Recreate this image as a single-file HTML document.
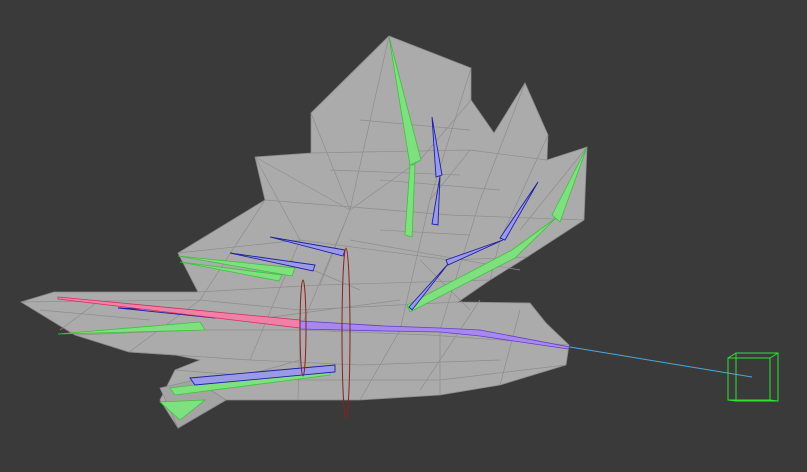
<!DOCTYPE html>
<html><head><style>html,body{margin:0;padding:0;background:#3a3a3a;width:807px;height:472px;overflow:hidden}</style></head>
<body>
<svg width="807" height="472" viewBox="0 0 807 472" xmlns="http://www.w3.org/2000/svg">
<rect width="807" height="472" fill="#3a3a3a"/>
<g fill="#ababab" stroke="#8c8c8c" stroke-width="0.8">
<polygon points="389,36 471,68 471,100 494,133 525,83 548,135 547,160 587,147 584,220 527,257 490,280 458,302 530,303 546,323 569,345 566,365 500,385 440,395 360,400 298,400 226,400 178,428 160,400 175,370 200,360 175,355 129,352 75,335 21,302 54,292 198,292 178,253 265,200 255,157 311,153 311,113"/>
<polygon points="160,388 178,428 226,400 195,380" fill="#a4a4a4"/>
</g>
<g stroke="#8e8e8e" stroke-width="0.7" fill="none">
<path d="M311,113 L389,36 L420,160 L471,100 M311,153 L470,150 L547,160 M255,157 L350,210 L420,160 M265,200 L450,215 L584,220 M178,253 L300,240 L450,260 L527,257 M198,292 L320,285 L490,280 M21,302 L200,300 L300,310 L458,302 M75,335 L200,330 L300,330 L430,335 L569,345 M129,352 L250,360 L360,365 L500,360 M175,370 L300,380 L440,380 L566,365 M389,36 L350,210 L300,330 M471,68 L430,200 L400,330 L360,400 M525,83 L480,200 L440,330 L440,395 M311,113 L350,210 L320,285 M255,157 L300,240 L250,360 M548,135 L500,240 L490,280 M587,147 L520,230 M300,330 L298,400 M400,330 L360,400 M200,300 L129,352 M265,200 L200,300 M470,150 L430,200 M380,180 L500,190 M350,240 L520,270 M330,170 L460,175 M360,120 L470,130 M250,320 L400,300 M480,300 L420,390 M520,310 L500,385 M230,380 L300,360 M40,310 L150,320 M100,300 L60,330 M380,230 L470,235 M290,260 L360,290 M420,260 L470,310"/>
</g>
<g fill="#7fe07f" stroke="#3fc03f" stroke-width="0.8">
<polygon points="389,37 421,160 410,165"/>
<polygon points="415,165 412,237 405,235 410,165"/>
<polygon points="587,147 560,222 552,215"/>
<polygon points="556,218 515,258 410,312 407,305 512,250"/>
<polygon points="178,256 295,268 292,276"/>
<polygon points="180,262 282,275 279,281"/>
<polygon points="58,334 200,322 205,330"/>
<polygon points="170,388 330,368 330,375 175,395"/>
<polygon points="160,402 205,400 180,420"/>
</g>
<g fill="#9a9ae8" stroke="#2020a0" stroke-width="0.9">
<polygon points="432,117 442,175 436,177"/>
<polygon points="440,176 438,225 432,224"/>
<polygon points="538,182 505,240 500,238"/>
<polygon points="503,240 448,265 446,260"/>
<polygon points="448,264 412,310 409,307"/>
<polygon points="270,237 345,250 343,256"/>
<polygon points="230,253 315,265 313,271"/>
<polygon points="118,308 215,312 215,318"/>
<polygon points="190,378 335,365 335,372 195,385"/>
</g>
<polygon points="58,297 300,320 300,328 58,299" fill="#f080a8" stroke="#d03060" stroke-width="0.8"/>
<polygon points="300,321 385,326 440,328 480,330 570,347 568,349 480,336 440,332 385,331 300,329" fill="#a888f0" stroke="#6040c0" stroke-width="0.8"/>
<g fill="none" stroke="#8a2020" stroke-width="1">
<ellipse cx="346" cy="333" rx="4" ry="85"/>
<ellipse cx="303" cy="328" rx="3" ry="48"/>
</g>
<line x1="570" y1="347" x2="752" y2="377" stroke="#4aa8e0" stroke-width="1"/>
<g fill="none" stroke="#30e030" stroke-width="1">
<rect x="728" y="358" width="42" height="42"/>
<rect x="736" y="353" width="42" height="48"/>
<line x1="728" y1="358" x2="736" y2="353"/><line x1="770" y1="358" x2="778" y2="353"/>
<line x1="728" y1="400" x2="736" y2="401"/><line x1="770" y1="400" x2="778" y2="401"/>
</g>
</svg>
</body></html>
